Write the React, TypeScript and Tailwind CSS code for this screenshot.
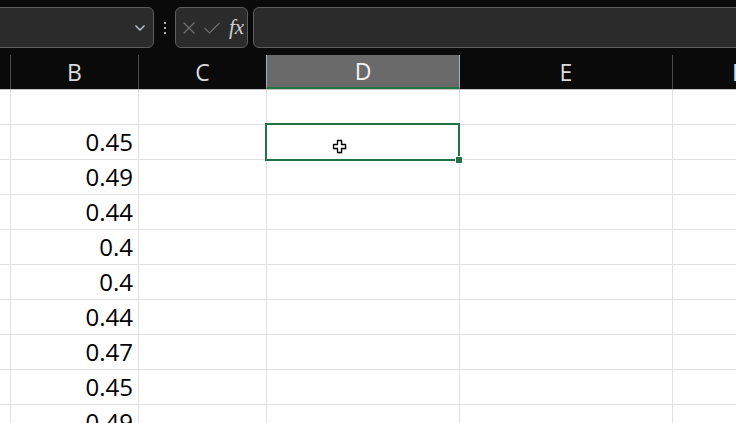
import React from "react";

const cols = [
  { key: "A", width: 11, label: "" },
  { key: "B", width: 128, label: "B" },
  { key: "C", width: 128, label: "C" },
  { key: "D", width: 193, label: "D" },
  { key: "E", width: 213, label: "E" },
  { key: "F", width: 131, label: "F" },
];

const values = ["", "0.45", "0.49", "0.44", "0.4", "0.4", "0.44", "0.47", "0.45", "0.49"];

function Cursor() {
  return (
    <svg width="17" height="17" viewBox="0 0 17 17" className="block">
      <path d="M6.5 2.5h4v4h4v4h-4v4h-4v-4h-4v-4h4z" fill="black" opacity="0.35" />
      <path
        d="M5.5 1.5h4v4h4v4h-4v4h-4v-4h-4v-4h4z"
        fill="white"
        stroke="black"
        strokeWidth="1.3"
        strokeLinejoin="round"
      />
    </svg>
  );
}

function FormulaBar() {
  return (
    <div className="flex h-[55px] items-start bg-[#0a0a0a] pt-[7px]">
      <div className="ml-[-12px] flex h-[41px] w-[166px] items-center justify-end rounded-md border border-[#5e5e5e] bg-[#2b2b2b] pr-[7px]">
        <svg width="12" height="8" viewBox="0 0 12 8">
          <path d="M1.5 1.5l4.5 4.5 4.5-4.5" fill="none" stroke="#c4ccd4" strokeWidth="1.3" />
        </svg>
      </div>
      <div className="flex h-[41px] w-[21px] flex-col items-center justify-center gap-[3px]">
        <span className="h-[2px] w-[2px] bg-[#b0b0b0]" />
        <span className="h-[2px] w-[2px] bg-[#b0b0b0]" />
        <span className="h-[2px] w-[2px] bg-[#b0b0b0]" />
      </div>
      <div className="flex h-[41px] w-[73px] items-center rounded-md border border-[#5e5e5e] bg-[#2b2b2b] pl-[6px]">
        <svg width="14" height="14" viewBox="0 0 14 14">
          <path d="M1.5 1.5l11 11M12.5 1.5l-11 11" stroke="#6e6e6e" strokeWidth="1.2" />
        </svg>
        <svg width="18" height="14" viewBox="0 0 18 14" className="ml-[7px]">
          <path d="M1.5 7l5 5 10-10" fill="none" stroke="#6e6e6e" strokeWidth="1.2" />
        </svg>
        <span
          className="ml-[8px] text-[21px] italic leading-none text-[#d0d0d0]"
          style={{ fontFamily: '"Liberation Serif", serif' }}
        >
          fx
        </span>
      </div>
      <div className="ml-[5px] mr-[-12px] h-[41px] flex-1 rounded-md border border-[#5e5e5e] bg-[#2b2b2b]" />
    </div>
  );
}

function HeaderRow() {
  return (
    <div className="flex h-[35px] border-b border-[#c4c4c4] bg-[#0a0a0a]">
      {cols.map((c) =>
        c.key === "D" ? (
          <div
            key={c.key}
            className="flex shrink-0 items-center justify-center border-x border-b-2 border-x-[#9fb0bf] border-b-[#217346] bg-[#6a6a6a] text-[#f2f2f2]"
            style={{ width: c.width + 1, marginLeft: -1 }}
          >
            {c.label}
          </div>
        ) : (
          <div
            key={c.key}
            className="flex shrink-0 items-center justify-center border-r border-[#4a4a4a] text-[#dcdcdc]"
            style={{ width: c.width }}
          >
            {c.label}
          </div>
        )
      )}
    </div>
  );
}

export default function App() {
  return (
    <div
      className="relative h-[423px] w-[736px] overflow-hidden bg-white"
      style={{ fontFamily: '"Open Sans", "Noto Sans", sans-serif' }}
    >
      <FormulaBar />
      <div className="text-[23px] leading-none">
        <HeaderRow />
        {values.map((v, i) => (
          <div key={i} className="flex h-[35px]">
            {cols.map((c) => (
              <div
                key={c.key}
                className="flex shrink-0 items-end justify-end border-b border-r border-[#e1e1e1] pb-[5px] pr-[5px] text-[24px] text-black"
                style={{ width: c.width }}
              >
                {c.key === "B" ? v : ""}
              </div>
            ))}
          </div>
        ))}
      </div>

      {/* active cell D2 */}
      <div className="absolute left-[265px] top-[123px] h-[38px] w-[195px] border-2 border-[#217346]">
        <div className="absolute bottom-[-4px] right-[-4px] h-[6px] w-[6px] bg-[#217346] ring-1 ring-white" />
      </div>

      <div className="absolute left-[332px] top-[139px]">
        <Cursor />
      </div>
    </div>
  );
}
